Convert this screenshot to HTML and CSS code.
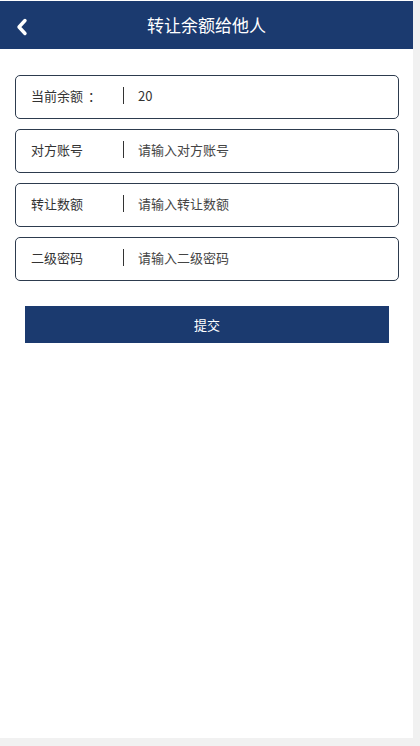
FILE: index.html
```html
<!DOCTYPE html>
<html lang="zh-CN">
<head>
  <meta charset="UTF-8" />
  <meta name="viewport" content="width=device-width, initial-scale=1.0"/>
  <title>转让余额给他人</title>
  <link rel="stylesheet" href="styles.css">
</head>
<body>
  <div class="page">
    <div class="app-header">
      <a class="back" href="#">
        <svg width="12" height="18" viewBox="0 0 12 18"><path d="M9 2.5 L3 9 L9 15.5" fill="none" stroke="#fff" stroke-width="3.4" stroke-linecap="round" stroke-linejoin="round"/></svg>
      </a>
      <span class="title">转让余额给他人</span>
    </div>

    <div class="container">
      <div class="field">
        <span class="label">当前余额<span class="colon">：</span></span>
        <span class="value">20</span>
      </div>
      <div class="field">
        <span class="label">对方账号</span>
        <input class="value" type="text" placeholder="请输入对方账号">
      </div>
      <div class="field">
        <span class="label">转让数额</span>
        <input class="value" type="text" placeholder="请输入转让数额">
      </div>
      <div class="field">
        <span class="label">二级密码</span>
        <input class="value" type="password" placeholder="请输入二级密码">
      </div>

      <button class="button">提交</button>
    </div>
  </div>
</body>
</html>
```

FILE: styles.css
```css
body {
  font-family: "Microsoft YaHei", "Noto Sans CJK SC", sans-serif;
  background: #f1f1f1;
  margin: 0;
  padding: 0;
}
.page {
  width: 413px;
  height: 738px;
  background: #fff;
  padding-top: 1px;
  box-sizing: border-box;
}
.app-header {
  position: relative;
  background-color: #1b3a6f;
  color: #fff;
  height: 48px;
  display: flex;
  align-items: center;
  justify-content: center;
}
.back {
  position: absolute;
  left: 16px;
  top: 16px;
  display: block;
  width: 12px;
  height: 18px;
}
.title {
  font-size: 17px;
  padding-bottom: 2px;
}
.container {
  padding: 26px 14px 0 15px;
}
.field {
  display: flex;
  align-items: center;
  height: 44px;
  box-sizing: border-box;
  border: 1px solid #2d3b4e;
  border-radius: 5px;
  margin-bottom: 10px;
  padding-bottom: 3px;
  font-size: 13px;
  color: #333;
}
.label {
  width: 92px;
  padding-left: 15px;
  height: 17px;
  line-height: 17px;
  border-right: 1px solid #333;
  flex-shrink: 0;
}
.colon {
  padding-left: 5px;
}
.value {
  margin-left: 14px;
  font-size: 13px;
  color: #333;
}
input.value {
  border: none;
  outline: none;
  padding: 0;
  font-family: inherit;
  flex: 1;
  background: transparent;
}
input.value::placeholder {
  color: #444;
}
.button {
  display: block;
  width: 364px;
  height: 37px;
  margin: 25px 0 0 10px;
  padding-bottom: 2px;
  background-color: #1b3a6f;
  color: #fff;
  font-family: inherit;
  font-size: 13px;
  border: none;
  cursor: pointer;
}
```
